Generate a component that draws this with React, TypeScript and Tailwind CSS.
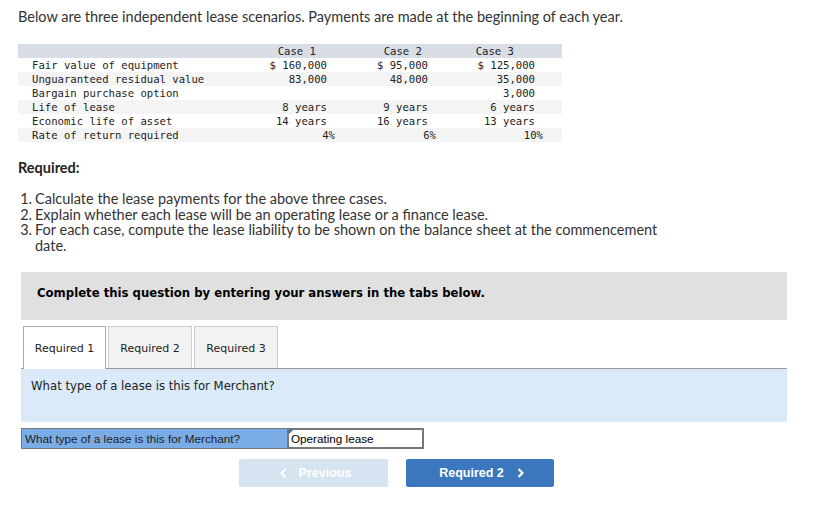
import React from 'react';

interface Row {
    label: string;
    c1: string;
    c2: string;
    c3: string;
    pct?: boolean;
}

const rows: Row[] = [
    { label: 'Fair value of equipment', c1: '$ 160,000', c2: '$ 95,000', c3: '$ 125,000' },
    { label: 'Unguaranteed residual value', c1: '83,000', c2: '48,000', c3: '35,000' },
    { label: 'Bargain purchase option', c1: '', c2: '', c3: '3,000' },
    { label: 'Life of lease', c1: '8 years', c2: '9 years', c3: '6 years' },
    { label: 'Economic life of asset', c1: '14 years', c2: '16 years', c3: '13 years' },
    { label: 'Rate of return required', c1: '4%', c2: '6%', c3: '10%', pct: true },
];

const mono = { fontFamily: '"DejaVu Sans Mono", "Liberation Mono", monospace' };
const arial = { fontFamily: '"Liberation Sans", Arial, sans-serif' };

const Chevron: React.FC<{ dir: 'left' | 'right' }> = ({ dir }) => (
    <svg width="7" height="10" viewBox="0 0 7 10" className="shrink-0">
        <polyline
            points={dir === 'left' ? '5.5,1 1.5,5 5.5,9' : '1.5,1 5.5,5 1.5,9'}
            fill="none"
            stroke="currentColor"
            strokeWidth="2.2"
        />
    </svg>
);

const App: React.FC = () => {
    return (
        <div className="w-[818px] h-[517px] bg-white text-[#2b2b2b] overflow-hidden" style={{ fontFamily: 'Lato, "Open Sans", sans-serif' }}>
            {/* Intro */}
            <p className="pl-[18px] pt-[8px] text-[14.5px] leading-[18px] text-[#333]">
                Below are three independent lease scenarios. Payments are made at the beginning of each year.
            </p>

            {/* Scenario table */}
            <div className="ml-[18px] mt-[18px] w-[544px] text-[10.6px] leading-[14px] text-[#222]" style={mono}>
                <div className="bg-[#d9dde6] grid grid-cols-[209px_100px_101px_107px_27px] h-[14px]">
                    <span />
                    <span className="text-right pr-[11px]">Case 1</span>
                    <span className="text-right pr-[6px]">Case 2</span>
                    <span className="text-right pr-[21px]">Case 3</span>
                    <span />
                </div>
                {rows.map((r, i) => (
                    <div key={r.label} className={`grid grid-cols-[209px_100px_101px_107px_27px] h-[14px] ${i % 2 === 1 ? 'bg-[#f4f4f4]' : 'bg-white'}`}>
                        <span className="pl-[14px] whitespace-nowrap">{r.label}</span>
                        <span className={`text-right ${r.pct ? 'translate-x-[8px]' : ''}`}>{r.c1}</span>
                        <span className={`text-right ${r.pct ? 'translate-x-[8px]' : ''}`}>{r.c2}</span>
                        <span className={`text-right ${r.pct ? 'translate-x-[8px]' : ''}`}>{r.c3}</span>
                        <span />
                    </div>
                ))}
            </div>

            {/* Required */}
            <div className="pl-[18px] mt-[18px] text-[14.5px] leading-[16px] text-[#333]">
                <p className="font-bold text-[#222]">Required:</p>
                <ol className="mt-[15px] w-[662px] leading-[15.6px]">
                    <li className="flex"><span className="w-[17px] shrink-0 text-right pr-[3px]">1.</span><span>Calculate the lease payments for the above three cases.</span></li>
                    <li className="flex"><span className="w-[17px] shrink-0 text-right pr-[3px]">2.</span><span>Explain whether each lease will be an operating lease or a finance lease.</span></li>
                    <li className="flex"><span className="w-[17px] shrink-0 text-right pr-[3px]">3.</span><span>For each case, compute the lease liability to be shown on the balance sheet at the commencement date.</span></li>
                </ol>
            </div>

            {/* Question area */}
            <div className="ml-[21px] mt-[19px] w-[766px]" style={{ fontFamily: '"DejaVu Sans", Verdana, sans-serif' }}>
                <div className="h-[48px] bg-[#e0e0e0] pl-[16px] pt-[8px]">
                    <span className="font-bold text-[11.7px] text-black">Complete this question by entering your answers in the tabs below.</span>
                </div>

                {/* Tabs */}
                <div className="mt-[6px] flex items-end gap-[2px] pl-[2px] border-b border-[#999] h-[43px]">
                    <div className="h-[43px] w-[83px] flex items-center justify-center pt-[2px] bg-white border border-[#aaa] border-b-0 -mb-px text-[11px] text-[#222]">Required 1</div>
                    <div className="h-[42px] w-[84px] flex items-center justify-center pt-[2px] bg-[#f2f2f2] border border-[#ccc] border-b-0 text-[11px] text-[#222]">Required 2</div>
                    <div className="h-[42px] w-[84px] flex items-center justify-center pt-[2px] bg-[#f2f2f2] border border-[#ccc] border-b-0 text-[11px] text-[#222]">Required 3</div>
                </div>

                <div className="h-[53px] bg-[#dbeaf9] pl-[10px] pt-[9px] text-[11.7px] text-[#222]">
                    What type of a lease is this for Merchant?
                </div>

                {/* Answer row */}
                <div className="mt-[6px] flex h-[21px] text-[11.7px]" style={arial}>
                    <div className="w-[267px] bg-[#7aace6] border border-[#777] flex items-center pl-[3px] text-[#222]">
                        What type of a lease is this for Merchant?
                    </div>
                    <div className="relative w-[136px] bg-white border-2 border-l border-[#777] flex items-center pl-[2px] text-black">
                        <span className="absolute left-0 top-0 w-0 h-0 border-t-[4px] border-r-[4px] border-t-[#2f6fb5] border-r-transparent" />
                        Operating lease
                    </div>
                </div>

                {/* Nav buttons */}
                <div className="mt-[10px] flex gap-[18px] pl-[218px]" style={arial}>
                    <button className="w-[149px] h-[28px] rounded-[2px] bg-[#d6e3f1] text-white font-bold text-[12.5px] flex items-center justify-center gap-[12px] pl-[4px]">
                        <Chevron dir="left" />
                        <span>Previous</span>
                    </button>
                    <button className="w-[148px] h-[28px] rounded-[2px] bg-[#3a77bd] text-white font-bold text-[12.5px] flex items-center justify-center gap-[13px] pl-[3px]">
                        <span>Required 2</span>
                        <Chevron dir="right" />
                    </button>
                </div>
            </div>
        </div>
    );
};

export default App;
